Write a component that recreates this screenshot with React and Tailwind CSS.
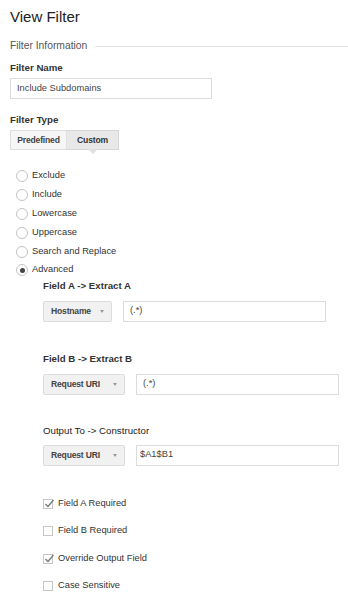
import React from 'react';

function Radio({ label, checked }) {
  return (
    <div className="flex h-[18.8px] items-center">
      <span className="ml-[6px] flex h-[12px] w-[12px] items-center justify-center rounded-full border border-[#c3c3c3] bg-white">
        {checked && <span className="h-[5px] w-[5px] rounded-full bg-[#444]" />}
      </span>
      <span className="ml-[4px] text-[9.3px] text-[#333]">{label}</span>
    </div>
  );
}

function Check({ label, checked }) {
  return (
    <div className="flex h-[27.5px] items-center">
      <span className="relative h-[10px] w-[10px] border border-[#c6c6c6] bg-white">
        {checked && (
          <svg className="absolute left-[0px] top-[-2px]" width="11" height="11" viewBox="0 0 11 11">
            <path d="M1.5 6 L4 8.5 L9.5 2" fill="none" stroke="#777" strokeWidth="1.3" />
          </svg>
        )}
      </span>
      <span className="ml-[5px] text-[9.3px] text-[#333]">{label}</span>
    </div>
  );
}

function FieldRow({ option, width, value, pad }) {
  return (
    <div className="flex h-[21px] items-stretch gap-[11px]">
      <div
        className={`flex items-center justify-between rounded-[2px] border border-[#dcdcdc] bg-[#f1f1f1] pl-[7px] pr-[7px] ${width}`}
      >
        <span className="text-[8.6px] font-bold tracking-[-0.2px] text-[#444]">{option}</span>
        <span className="h-0 w-0 border-x-[2.5px] border-t-[3px] border-x-transparent border-t-[#999]" />
      </div>
      <div className={`flex w-[203px] items-center border border-[#dcdcdc] bg-white ${pad}`}>
        <span className="text-[9.3px] text-[#444]">{value}</span>
      </div>
    </div>
  );
}

export default function App() {
  return (
    <div className="h-[600px] w-[348px] overflow-hidden bg-white pl-[10px] font-['Liberation_Sans',Arial,sans-serif] text-[#333]">
      <div className="mt-[8px] h-[18px] text-[15px] leading-[18px] text-[#222]">View Filter</div>

      <div className="mt-[13px] flex h-[14px] items-center">
        <span className="text-[10.3px] text-[#555]">Filter Information</span>
        <span className="ml-[8px] h-px flex-1 bg-[#e3e3e3]" />
      </div>

      <div className="mt-[9px] h-[12px] text-[9.7px] font-bold leading-[12px] text-[#333]">Filter Name</div>
      <div className="mt-[4px] flex h-[21px] w-[202px] items-center border border-[#dcdcdc] bg-white pl-[6px]">
        <span className="text-[9.3px] text-[#444]">Include Subdomains</span>
      </div>

      <div className="mt-[15px] h-[12px] text-[9.7px] font-bold leading-[12px] text-[#333]">Filter Type</div>
      <div className="mt-[4px] flex h-[20px] w-[109px]">
        <div className="flex w-[57px] items-center justify-center border border-[#dedede] bg-[#f6f6f6] text-[8.6px] font-bold tracking-[-0.2px] text-[#444]">
          Predefined
        </div>
        <div className="relative flex w-[52px] items-center justify-center border border-l-0 border-[#d6d6d6] bg-[#e8e8e8] text-[8.6px] font-bold tracking-[-0.2px] text-[#333]">
          Custom
          <span className="absolute left-1/2 top-full h-0 w-0 -translate-x-1/2 border-x-[5px] border-t-[5px] border-x-transparent border-t-[#e0e0e0]" />
        </div>
      </div>

      <div className="mt-[17px]">
        <Radio label="Exclude" />
        <Radio label="Include" />
        <Radio label="Lowercase" />
        <Radio label="Uppercase" />
        <Radio label="Search and Replace" />
        <Radio label="Advanced" checked />
      </div>

      <div className="pl-[33px]">
        <div className="h-[12px] text-[9.7px] font-bold leading-[12px] text-[#333]">Field A -&gt; Extract A</div>
        <div className="mt-[9px]">
          <FieldRow option="Hostname" width="w-[69px]" value="(.*)" pad="pl-[6px]" />
        </div>

        <div className="mt-[31px] h-[12px] text-[9.7px] font-bold leading-[12px] text-[#333]">Field B -&gt; Extract B</div>
        <div className="mt-[9px]">
          <FieldRow option="Request URI" width="w-[82px]" value="(.*)" pad="pl-[6px]" />
        </div>

        <div className="mt-[30px] h-[12px] text-[9.7px] leading-[12px] text-[#222]">Output To -&gt; Constructor</div>
        <div className="mt-[8px]">
          <FieldRow option="Request URI" width="w-[82px]" value="$A1$B1" pad="pl-[3px]" />
        </div>

        <div className="mt-[24px]">
          <Check label="Field A Required" checked />
          <Check label="Field B Required" />
          <Check label="Override Output Field" checked />
          <Check label="Case Sensitive" />
        </div>
      </div>
    </div>
  );
}
